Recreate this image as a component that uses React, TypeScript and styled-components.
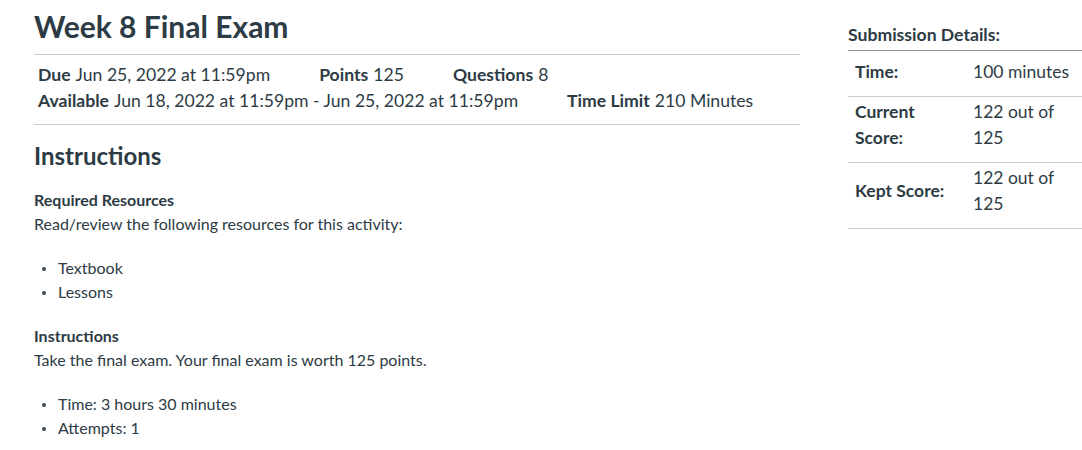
import React from "react";
import styled, { createGlobalStyle } from "styled-components";

const Global = createGlobalStyle`
  html, body { margin: 0; padding: 0; background: #fff; }
  body { font-family: Lato, "Open Sans", sans-serif; color: #2d3b45; }
  * { box-sizing: border-box; }
`;

const Page = styled.div`
  display: grid;
  grid-template-columns: 766px 234px;
  column-gap: 48px;
  padding-left: 34px;
  width: 1082px;
`;

const Main = styled.main`
  display: flex;
  flex-direction: column;
`;

const Title = styled.h1`
  margin: 0;
  padding: 8px 0 9px;
  font-size: 30px;
  line-height: 37px;
  font-weight: 700;
  color: #2d3b45;
  border-bottom: 1px solid #c7cdd1;
`;

const Meta = styled.div`
  padding: 7px 0 10px 4px;
  border-bottom: 1px solid #c7cdd1;
  display: flex;
  flex-direction: column;
`;

const MetaRow = styled.div`
  display: flex;
  column-gap: 49px;
  font-size: 17.6px;
  line-height: 26px;
`;

const MetaItem = styled.span`
  white-space: nowrap;
`;

const MetaLabel = styled.span`
  font-weight: 700;
  margin-right: 5px;
`;

const Section = styled.section`
  font-size: 16px;
  line-height: 24px;
`;

const H2 = styled.h2`
  margin: 16px 0 17px;
  font-size: 24px;
  line-height: 30px;
  font-weight: 700;
`;

const Sub = styled.div`
  font-weight: 700;
`;

const P = styled.p`
  margin: 0 0 20px;
`;

const List = styled.ul`
  margin: 0 0 20px;
  padding: 0;
  list-style: none;
`;

const Item = styled.li`
  display: flex;
  align-items: center;
  &::before {
    content: "";
    width: 4px;
    height: 4px;
    border-radius: 50%;
    background: #3d4a53;
    margin: 1px 12px 0 8px;
    flex: none;
  }
`;

const Side = styled.aside`
  display: flex;
  flex-direction: column;
  padding-top: 22px;
`;

const SideTitle = styled.h3`
  margin: 0;
  font-size: 17.6px;
  line-height: 26px;
  font-weight: 700;
  padding-bottom: 2px;
  border-bottom: 1px solid #8b969e;
`;

const Table = styled.table`
  width: 100%;
  border-collapse: collapse;
  font-size: 17.5px;
  line-height: 26px;
`;

const Tr = styled.tr`
  border-bottom: 1px solid #c7cdd1;
`;

const Th = styled.th<{ $top: number }>`
  text-align: left;
  font-weight: 700;
  width: 118px;
  padding: ${(p) => p.$top}px 7px 11px;
  vertical-align: middle;
`;

const Td = styled.td<{ $top: number }>`
  padding: ${(p) => p.$top}px 7px 11px;
  vertical-align: middle;
`;

export default function App() {
  return (
    <>
      <Global />
      <Page>
        <Main>
          <Title>Week 8 Final Exam</Title>
          <Meta>
            <MetaRow>
              <MetaItem><MetaLabel>Due</MetaLabel>Jun 25, 2022 at 11:59pm</MetaItem>
              <MetaItem><MetaLabel>Points</MetaLabel>125</MetaItem>
              <MetaItem><MetaLabel>Questions</MetaLabel>8</MetaItem>
            </MetaRow>
            <MetaRow>
              <MetaItem><MetaLabel>Available</MetaLabel>Jun 18, 2022 at 11:59pm - Jun 25, 2022 at 11:59pm</MetaItem>
              <MetaItem><MetaLabel>Time Limit</MetaLabel>210 Minutes</MetaItem>
            </MetaRow>
          </Meta>
          <Section>
            <H2>Instructions</H2>
            <Sub>Required Resources</Sub>
            <P>Read/review the following resources for this activity:</P>
            <List>
              <Item>Textbook</Item>
              <Item>Lessons</Item>
            </List>
            <Sub>Instructions</Sub>
            <P>Take the final exam. Your final exam is worth 125 points.</P>
            <List>
              <Item>Time: 3 hours 30 minutes</Item>
              <Item>Attempts: 1</Item>
            </List>
          </Section>
        </Main>
        <Side>
          <SideTitle>Submission Details:</SideTitle>
          <Table>
            <tbody>
              <Tr>
                <Th $top={8}>Time:</Th>
                <Td $top={8}>100 minutes</Td>
              </Tr>
              <Tr>
                <Th $top={2}>Current Score:</Th>
                <Td $top={2}>122 out of 125</Td>
              </Tr>
              <Tr>
                <Th $top={2}>Kept Score:</Th>
                <Td $top={2}>122 out of 125</Td>
              </Tr>
            </tbody>
          </Table>
        </Side>
      </Page>
    </>
  );
}
